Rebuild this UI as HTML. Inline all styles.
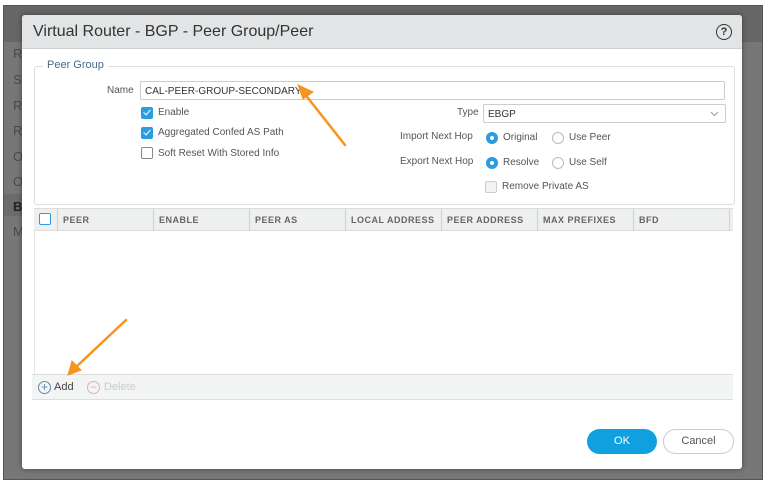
<!DOCTYPE html>
<html><head><meta charset="utf-8">
<style>
*{box-sizing:border-box;margin:0;padding:0}
body{width:768px;height:483px;background:#fff;font-family:"Liberation Sans",sans-serif;position:relative;overflow:hidden;color:#333}
.bg{position:absolute;left:3px;top:5px;width:760px;height:475px;background:#777;border:1px solid #555}
.bgh{position:absolute;left:0;top:0;width:100%;height:36px;background:#666}
.bgl{position:absolute;left:9px;color:#4a4a4a;font-size:13px}
.dlg{position:absolute;left:22px;top:15px;width:720px;height:454px;background:#fff;border-radius:3px;box-shadow:0 0 6px rgba(0,0,0,.4);overflow:hidden}
.hd{height:34px;background:#e3e4e5;border-bottom:1px solid #cfd0d1;font-size:16px;padding:8px 0 0 11px;color:#333}
.help{position:absolute;right:10px;top:9px;width:16px;height:16px;border:1px solid #333;border-radius:50%;font-size:11px;font-weight:bold;text-align:center;line-height:14px}
.fs{position:absolute;left:12px;top:51px;width:701px;height:139px;border:1px solid #ddd;border-radius:3px}
.lg{position:absolute;left:8px;top:-8px;background:#fff;padding:0 4px;font-size:11px;color:#4a6a86}
.t{position:absolute;font-size:10px;color:#555;white-space:nowrap}
.inp{position:absolute;border:1px solid #ccc;border-radius:2px;background:#fff;font-size:10px;color:#333;padding:4px 4px 0}
.cb{position:absolute;width:12px;height:12px;border-radius:2px}
.cb.on{background:#2a9de0}
.cb.on::after{content:"";position:absolute;left:4px;top:1px;width:3px;height:6px;border:solid #fff;border-width:0 1.5px 1.5px 0;transform:rotate(40deg)}
.cb.off{border:1px solid #888;background:#fff}
.rd{position:absolute;width:12px;height:12px;border-radius:50%}
.rd.on{background:#2a9de0}
.rd.on::after{content:"";position:absolute;left:4px;top:4px;width:4px;height:4px;background:#fff;border-radius:50%}
.rd.off{border:1px solid #bbb;background:#fff}
.th{position:absolute;left:12px;top:193px;width:699px;height:23px;background:#eeefef;border-top:1px solid #ddd;border-bottom:1px solid #ddd}
.th div{position:absolute;top:0;height:22px;border-left:1px solid #d0d0d0;font-size:9px;font-weight:bold;color:#666;letter-spacing:.5px;padding:6px 0 0 5px}
.tb{position:absolute;left:12px;top:216px;width:699px;height:143px;border-left:1px solid #e5e5e5}
.bar{position:absolute;left:10px;top:359px;width:701px;height:26px;background:#f3f4f4;border-top:1px solid #ddd;border-bottom:1px solid #ddd}
.btn{position:absolute;top:414px;height:25px;border-radius:13px;font-size:11px;text-align:center;line-height:25px}
</style></head><body>
<div class="bg"><div class="bgh"></div>
<div class="bgl" style="top:40px">R</div><div class="bgl" style="top:66px">S</div><div class="bgl" style="top:92px">R</div><div class="bgl" style="top:117px">R</div><div class="bgl" style="top:143px">O</div><div class="bgl" style="top:168px">O</div>
<div style="position:absolute;left:0;top:188px;width:20px;height:22px;background:#6b6b6b"></div><div class="bgl" style="top:193px;color:#222;font-weight:bold">B</div><div class="bgl" style="top:218px">M</div>
</div>
<div class="dlg">
<div class="hd">Virtual Router - BGP - Peer Group/Peer</div>
<div class="help">?</div>
<div class="fs"><div class="lg">Peer Group</div></div>
<div class="t" style="left:85px;top:70px">Name</div>
<div class="inp" style="left:118px;top:66px;width:585px;height:19px">CAL-PEER-GROUP-SECONDARY</div>
<div class="cb on" style="left:119px;top:92px"></div><div class="t" style="left:136px;top:92px">Enable</div>
<div class="cb on" style="left:119px;top:112px"></div><div class="t" style="left:136px;top:112px">Aggregated Confed AS Path</div>
<div class="cb off" style="left:119px;top:132px"></div><div class="t" style="left:136px;top:133px">Soft Reset With Stored Info</div>
<div class="t" style="left:435px;top:92px">Type</div>
<div class="inp" style="left:461px;top:89px;width:243px;height:19px">EBGP<svg style="position:absolute;right:6px;top:6px" width="9" height="6"><path d="M1 1 L4.5 4.5 L8 1" stroke="#999" fill="none"/></svg></div>
<div class="t" style="left:378px;top:116px">Import Next Hop</div>
<div class="rd on" style="left:464px;top:117px"></div><div class="t" style="left:481px;top:117px">Original</div>
<div class="rd off" style="left:530px;top:117px"></div><div class="t" style="left:547px;top:117px">Use Peer</div>
<div class="t" style="left:378px;top:141px">Export Next Hop</div>
<div class="rd on" style="left:464px;top:142px"></div><div class="t" style="left:481px;top:142px">Resolve</div>
<div class="rd off" style="left:530px;top:142px"></div><div class="t" style="left:547px;top:142px">Use Self</div>
<div class="cb" style="left:463px;top:166px;border:1px solid #ccc;background:#f3f3f3"></div><div class="t" style="left:480px;top:166px">Remove Private AS</div>
<div class="th">
<div style="left:0;border:none"><span style="position:absolute;left:5px;top:4px;width:12px;height:12px;border:1.5px solid #2a9de0;border-radius:2px;background:#fff"></span></div>
<div style="left:23px;width:96px">PEER</div><div style="left:119px;width:96px">ENABLE</div><div style="left:215px;width:96px">PEER AS</div><div style="left:311px;width:96px">LOCAL ADDRESS</div><div style="left:407px;width:96px">PEER ADDRESS</div><div style="left:503px;width:96px">MAX PREFIXES</div><div style="left:599px;width:96px">BFD</div><div style="left:695px;width:4px"></div>
</div>
<div class="tb"></div>
<div class="bar">
<span style="position:absolute;left:6px;top:6px;width:13px;height:13px;border:1px solid #5a8bb0;border-radius:50%;color:#5a8bb0;font-size:12px;line-height:11px;text-align:center">+</span>
<span class="t" style="left:22px;top:6px;font-size:11px;color:#444">Add</span>
<span style="position:absolute;left:55px;top:6px;width:13px;height:13px;border:1px solid #e0b0b0;border-radius:50%;color:#e0b0b0;font-size:12px;line-height:10px;text-align:center">&#8722;</span>
<span class="t" style="left:72px;top:6px;font-size:11px;color:#ccc">Delete</span>
</div>
<div class="btn" style="left:565px;width:70px;background:#10a0e0;color:#fff">OK</div>
<div class="btn" style="left:641px;width:71px;border:1px solid #ccc;color:#555;line-height:23px">Cancel</div>
</div>
<svg style="position:absolute;left:0;top:0" width="768" height="483">
<g stroke="#f7941d" stroke-width="2.5" fill="#f7941d" stroke-linecap="round">
<line x1="345" y1="145" x2="304" y2="93"/><polygon points="298,85 313,92 303,99" stroke-width="1"/>
<line x1="126" y1="320" x2="75" y2="368"/><polygon points="68,375 72,361 81,370" stroke-width="1"/>
</g></svg>
</body></html>
